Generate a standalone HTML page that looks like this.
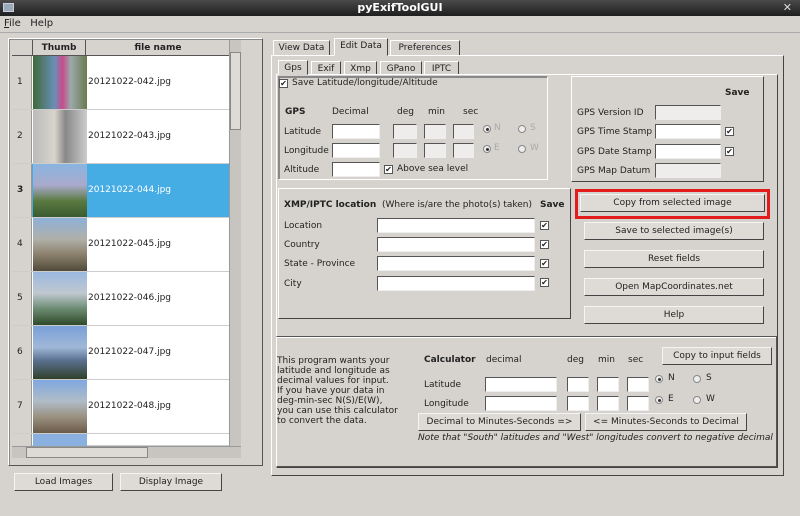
<!DOCTYPE html>
<html><head><meta charset="utf-8"><style>
*{box-sizing:border-box;margin:0;padding:0}
body{width:800px;height:516px;background:#d6d3ce;font-family:"DejaVu Sans","Liberation Sans",sans-serif;font-size:9px;color:#222;position:relative;overflow:hidden}
.a{position:absolute}
.in{position:absolute;background:#fff;border:1px solid;border-color:#555 #eee #eee #555;height:15px}
.dis{background:#eeedeb}
.btn{position:absolute;background:#dedbd6;border:1px solid;border-color:#f4f4f4 #444 #444 #f4f4f4;text-align:center;line-height:16px;height:18px}
.fr{position:absolute;border:1px solid;border-color:#fff #555 #555 #fff;box-shadow:inset 1px 1px 0 #888}
.cb{position:absolute;width:9px;height:9px;background:#fff;border:1px solid #555;font-size:8px;line-height:7px;text-align:center}
.rd{position:absolute;width:8px;height:8px;border-radius:50%;border:1px solid #888;background:#eee}
.rd.on::after{content:"";position:absolute;left:2px;top:2px;width:3px;height:3px;border-radius:50%;background:#333}
.tab{position:absolute;border:1px solid;border-color:#fff #444 transparent #fff;text-align:center;line-height:14px}
.row{position:absolute;left:12px;width:217px;height:54px;border-bottom:1px solid #ccc;background:#fff}
.row .n{position:absolute;left:0;width:20px;height:53px;background:#d6d3ce;line-height:53px;padding-left:5px;border-right:1px solid #999}
.row .t{position:absolute;left:21px;width:54px;height:53px}
.row .f{position:absolute;left:76px;line-height:53px;font-size:9px}
.b{font-weight:bold}
</style></head><body>
<div class="a" style="left:0;top:0;width:800px;height:16px;background:linear-gradient(#4a4a4a,#1e1e1e);color:#fff;font-weight:bold;font-size:11px;text-align:center;line-height:16px">pyExifToolGUI</div>
<div class="a" style="left:3px;top:3px;width:11px;height:9px;background:#9ab;border:1px solid #ccd"></div>
<div class="a" style="right:8px;top:1px;color:#ddd;font-size:11px">✕</div>
<div class="a" style="left:4px;top:18px;font-size:10px"><u>F</u>ile&nbsp;&nbsp;&nbsp;Help</div>
<div class="a" style="left:0;top:32px;width:800px;height:1px;background:#aaa"></div>

<div class="fr" style="left:8px;top:38px;width:255px;height:428px"></div>
<div class="a" style="left:12px;top:40px;width:229px;height:418px;background:#fff;border:1px solid #777"></div>
<div class="a" style="left:12px;top:40px;width:217px;height:16px;background:#d6d3ce;border-bottom:1px solid #555"></div>
<div class="a b" style="left:32px;top:40px;width:54px;height:16px;text-align:center;line-height:16px;border-left:1px solid #555;border-right:1px solid #555">Thumb</div>
<div class="a b" style="left:87px;top:40px;width:142px;text-align:center;line-height:16px">file name</div>
<div class="row" style="top:56px"><div class="n">1</div><div class="t" style="background:linear-gradient(90deg,#3f6a3a 0,#6a8fb8 40%,#c84b8a 55%,#9aa 70%,#6a7a50)"></div><div class="f">20121022-042.jpg</div></div>
<div class="row" style="top:110px"><div class="n">2</div><div class="t" style="background:linear-gradient(90deg,#bbb,#d8d4cc 40%,#888 60%,#ccc)"></div><div class="f">20121022-043.jpg</div></div>
<div class="row" style="top:164px;background:#46ace4;color:#fff"><div class="n" style="color:#222;font-weight:bold">3</div><div class="t" style="background:linear-gradient(#8ab4e0 0,#aac 40%,#5a7a40 70%,#3a5a30)"></div><div class="f">20121022-044.jpg</div></div>
<div class="row" style="top:218px"><div class="n">4</div><div class="t" style="background:linear-gradient(#8eb0d8,#b0b0a8 40%,#8a7e6a 70%,#504a3a)"></div><div class="f">20121022-045.jpg</div></div>
<div class="row" style="top:272px"><div class="n">5</div><div class="t" style="background:linear-gradient(#9ab8e0,#c0c8d0 40%,#6a8a70 70%,#2f4a2a)"></div><div class="f">20121022-046.jpg</div></div>
<div class="row" style="top:326px"><div class="n">6</div><div class="t" style="background:linear-gradient(#7aa0d8,#a0b8d8 40%,#5a7090 65%,#30402a)"></div><div class="f">20121022-047.jpg</div></div>
<div class="row" style="top:380px"><div class="n">7</div><div class="t" style="background:linear-gradient(#80a8e0,#b0bcc8 40%,#9a9080 70%,#6a5a48)"></div><div class="f">20121022-048.jpg</div></div>
<div class="row" style="top:434px;height:12px"><div class="n" style="height:12px"></div><div class="t" style="height:12px;background:#8ab0e0"></div></div>
<div class="a" style="left:229px;top:40px;width:12px;height:406px;background:#c8c5c0;border-left:1px solid #999"></div>
<div class="a" style="left:230px;top:52px;width:11px;height:78px;background:#dedbd6;border:1px solid #888"></div>
<div class="a" style="left:12px;top:446px;width:229px;height:12px;background:#c8c5c0;border-top:1px solid #999"></div>
<div class="a" style="left:26px;top:447px;width:122px;height:11px;background:#dedbd6;border:1px solid #888"></div>
<div class="btn" style="left:14px;top:473px;width:99px">Load Images</div>
<div class="btn" style="left:120px;top:473px;width:102px">Display Image</div>

<div class="tab" style="left:273px;top:40px;width:57px;height:16px">View Data</div>
<div class="tab" style="left:334px;top:38px;width:54px;height:18px;background:#d6d3ce;z-index:2">Edit Data</div>
<div class="tab" style="left:390px;top:40px;width:70px;height:16px">Preferences</div>
<div class="fr" style="left:271px;top:55px;width:513px;height:421px;border-color:#fff #444 #444 #fff;box-shadow:none"></div>
<div class="tab" style="left:278px;top:60px;width:30px;height:15px;z-index:2;background:#d6d3ce">Gps</div>
<div class="tab" style="left:311px;top:61px;width:30px;height:14px">Exif</div>
<div class="tab" style="left:344px;top:61px;width:33px;height:14px">Xmp</div>
<div class="tab" style="left:380px;top:61px;width:42px;height:14px">GPano</div>
<div class="tab" style="left:424px;top:61px;width:35px;height:14px">IPTC</div>
<div class="fr" style="left:276px;top:74px;width:502px;height:394px;border-color:#fff #444 #444 #fff;box-shadow:none"></div>

<div class="fr" style="left:278px;top:76px;width:270px;height:104px;border-color:#888 #fff #fff #888"></div>
<div class="cb" style="left:279px;top:79px">✔</div><div class="a" style="left:292px;top:78px">Save Latitude/longitude/Altitude</div>
<div class="a b" style="left:285px;top:107px">GPS</div><div class="a" style="left:332px;top:107px">Decimal</div>
<div class="a" style="left:397px;top:107px">deg</div><div class="a" style="left:428px;top:107px">min</div><div class="a" style="left:463px;top:107px">sec</div>
<div class="a" style="left:284px;top:127px">Latitude</div><div class="a" style="left:284px;top:146px">Longitude</div><div class="a" style="left:284px;top:165px">Altitude</div>
<div class="in" style="left:332px;top:124px;width:48px"></div><div class="in" style="left:332px;top:143px;width:48px"></div><div class="in" style="left:332px;top:162px;width:48px"></div>
<div class="in dis" style="left:393px;top:124px;width:24px"></div><div class="in dis" style="left:424px;top:124px;width:22px"></div><div class="in dis" style="left:453px;top:124px;width:21px"></div>
<div class="in dis" style="left:393px;top:143px;width:24px"></div><div class="in dis" style="left:424px;top:143px;width:22px"></div><div class="in dis" style="left:453px;top:143px;width:21px"></div>
<div class="rd on" style="left:483px;top:125px"></div><div class="a" style="left:494px;top:123px;color:#aaa">N</div><div class="rd" style="left:518px;top:125px"></div><div class="a" style="left:530px;top:123px;color:#aaa">S</div>
<div class="rd on" style="left:483px;top:145px"></div><div class="a" style="left:494px;top:143px;color:#aaa">E</div><div class="rd" style="left:518px;top:145px"></div><div class="a" style="left:530px;top:143px;color:#aaa">W</div>
<div class="cb" style="left:384px;top:165px">✔</div><div class="a" style="left:397px;top:164px">Above sea level</div>

<div class="fr" style="left:571px;top:76px;width:193px;height:106px;border-color:#fff #444 #444 #fff;box-shadow:none"></div>
<div class="a b" style="left:725px;top:88px">Save</div>
<div class="a" style="left:577px;top:108px">GPS Version ID</div><div class="a" style="left:577px;top:127px">GPS Time Stamp</div><div class="a" style="left:577px;top:147px">GPS Date Stamp</div><div class="a" style="left:577px;top:166px">GPS Map Datum</div>
<div class="in dis" style="left:655px;top:105px;width:66px"></div><div class="in" style="left:655px;top:124px;width:66px"></div><div class="in" style="left:655px;top:144px;width:66px"></div><div class="in dis" style="left:655px;top:163px;width:66px"></div>
<div class="cb" style="left:725px;top:127px">✔</div><div class="cb" style="left:725px;top:147px">✔</div>

<div class="fr" style="left:278px;top:188px;width:293px;height:131px;border-color:#fff #444 #444 #fff;box-shadow:none"></div>
<div class="a" style="left:284px;top:200px"><b>XMP/IPTC location</b>&nbsp; (Where is/are the photo(s) taken)</div><div class="a b" style="left:540px;top:200px">Save</div>
<div class="a" style="left:284px;top:221px">Location</div><div class="a" style="left:284px;top:240px">Country</div><div class="a" style="left:284px;top:259px">State - Province</div><div class="a" style="left:284px;top:279px">City</div>
<div class="in" style="left:377px;top:218px;width:158px"></div><div class="in" style="left:377px;top:237px;width:158px"></div><div class="in" style="left:377px;top:256px;width:158px"></div><div class="in" style="left:377px;top:276px;width:158px"></div>
<div class="cb" style="left:540px;top:221px">✔</div><div class="cb" style="left:540px;top:240px">✔</div><div class="cb" style="left:540px;top:259px">✔</div><div class="cb" style="left:540px;top:278px">✔</div>

<div class="a" style="left:575px;top:189px;width:195px;height:30px;border:3px solid #e31b1b"></div>
<div class="btn" style="left:580px;top:194px;width:185px">Copy from selected image</div>
<div class="btn" style="left:584px;top:222px;width:180px">Save to selected image(s)</div>
<div class="btn" style="left:584px;top:250px;width:180px">Reset fields</div>
<div class="btn" style="left:584px;top:278px;width:180px">Open MapCoordinates.net</div>
<div class="btn" style="left:584px;top:306px;width:180px">Help</div>

<div class="fr" style="left:276px;top:336px;width:501px;height:131px;border-color:#555 #555 #555 #fff;box-shadow:inset 0 1px 0 #fff"></div>
<div class="a" style="left:277px;top:356px;line-height:10px">This program wants your<br>latitude and longitude as<br>decimal values for input.<br>If you have your data in<br>deg-min-sec N(S)/E(W),<br>you can use this calculator<br>to convert the data.</div>
<div class="a b" style="left:424px;top:355px">Calculator</div><div class="a" style="left:486px;top:355px">decimal</div>
<div class="a" style="left:567px;top:355px">deg</div><div class="a" style="left:598px;top:355px">min</div><div class="a" style="left:628px;top:355px">sec</div>
<div class="btn" style="left:662px;top:347px;width:110px">Copy to input fields</div>
<div class="a" style="left:424px;top:380px">Latitude</div><div class="a" style="left:424px;top:399px">Longitude</div>
<div class="in" style="left:485px;top:377px;width:72px"></div><div class="in" style="left:567px;top:377px;width:22px"></div><div class="in" style="left:597px;top:377px;width:22px"></div><div class="in" style="left:627px;top:377px;width:22px"></div>
<div class="in" style="left:485px;top:396px;width:72px"></div><div class="in" style="left:567px;top:396px;width:22px"></div><div class="in" style="left:597px;top:396px;width:22px"></div><div class="in" style="left:627px;top:396px;width:22px"></div>
<div class="rd on" style="left:655px;top:375px"></div><div class="a" style="left:668px;top:373px">N</div><div class="rd" style="left:693px;top:375px"></div><div class="a" style="left:706px;top:373px">S</div>
<div class="rd on" style="left:655px;top:396px"></div><div class="a" style="left:668px;top:394px">E</div><div class="rd" style="left:693px;top:396px"></div><div class="a" style="left:706px;top:394px">W</div>
<div class="btn" style="left:418px;top:413px;width:163px">Decimal to Minutes-Seconds =&gt;</div>
<div class="btn" style="left:585px;top:413px;width:162px">&lt;= Minutes-Seconds to Decimal</div>
<div class="a" style="left:418px;top:433px;font-style:italic;white-space:nowrap">Note that "South" latitudes and "West" longitudes convert to negative decimal</div>
</body></html>
